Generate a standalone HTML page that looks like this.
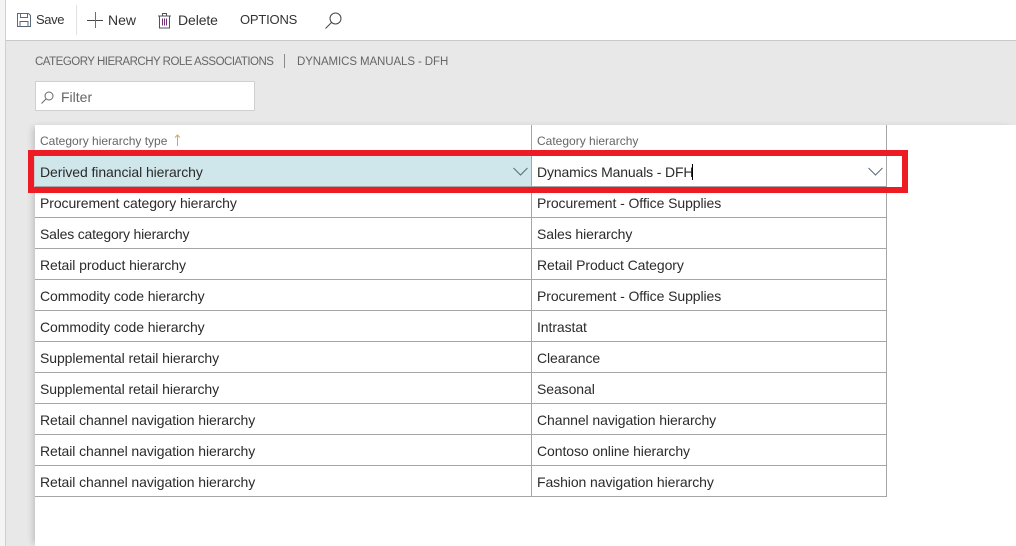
<!DOCTYPE html>
<html><head><meta charset="utf-8">
<style>
html,body{margin:0;padding:0;width:1016px;height:546px;overflow:hidden;background:#fff;font-family:"Liberation Sans",sans-serif;color:#2b2b2b}
.a{position:absolute;white-space:nowrap}
.t{font-size:14px;line-height:20px;top:10px;color:#333}
.c{font-size:14px;line-height:20px;color:#2b2b2b;letter-spacing:-.08px}
.l{position:absolute;height:1px;left:35px;width:852px;background:#a6a6a6}
</style></head><body>
<div class="a" style="left:0;top:0;width:5px;height:546px;background:#f4f4f4"></div>
<div class="a" style="left:5px;top:0;width:1px;height:546px;background:#cfcfcf"></div>
<div class="a" style="left:6px;top:41px;width:1010px;height:505px;background:#e8e8e8"></div>
<div class="a" style="left:6px;top:40px;width:1010px;height:1px;background:#c8c8c8"></div>
<div class="a" style="left:76px;top:5px;width:1px;height:30px;background:#e2e2e2"></div>

<svg class="a" style="left:16px;top:12px" width="16" height="16" fill="none" stroke="#5a6a78" stroke-width="1"><path d="M1.500 1.500h11l2 2v11h-13z"/><path d="M4.500 1.500v4h7v-4M4 14.500v-5h8v5"/></svg>
<div class="a t" style="left:36px;font-size:13px;letter-spacing:-.4px">Save</div>
<svg class="a" style="left:87px;top:12px" width="16" height="16" fill="none" stroke="#444" stroke-width="1"><path d="M0 8.500h16"/><path d="M8.500 0v16" stroke="#8a6a3a"/></svg>
<div class="a t" style="left:108px">New</div>
<svg class="a" style="left:158px;top:13px" width="13" height="16" fill="none" stroke="#4a5560" stroke-width="1"><path d="M0 3h13M4.500 3V.5h4V3M1.500 3v12h10V3"/><path d="M4.500 5.500v7M6.500 5.500v7M8.500 5.500v7" stroke="#7a2f7a"/></svg>
<div class="a t" style="left:178px;letter-spacing:-.1px">Delete</div>
<div class="a t" style="left:240px;font-size:13px;letter-spacing:-.2px">OPTIONS</div>
<svg class="a" style="left:325px;top:12px" width="17" height="17" fill="none" stroke="#444" stroke-width="1"><circle cx="10.500" cy="6.500" r="5.500"/><path d="M6.500 10.500L.5 16.500"/></svg>

<div class="a" style="left:35px;top:54px;font-size:11.500px;line-height:16px;color:#666;letter-spacing:-.5px">CATEGORY HIERARCHY ROLE ASSOCIATIONS</div>
<div class="a" style="left:284px;top:54px;width:1px;height:14px;background:#8a8a8a"></div>
<div class="a" style="left:297px;top:54px;font-size:11.500px;line-height:16px;color:#666;letter-spacing:-.1px">DYNAMICS MANUALS - DFH</div>

<div class="a" style="left:35px;top:81px;width:218px;height:28px;background:#fff;border:1px solid #d0d0d0"></div>
<svg class="a" style="left:41px;top:91px" width="13" height="13" fill="none" stroke="#666" stroke-width="1"><circle cx="8" cy="5" r="4"/><path d="M5 8L.5 12.500"/></svg>
<div class="a" style="left:61px;top:87px;font-size:14px;line-height:20px;color:#666">Filter</div>

<div class="a" style="left:35px;top:125px;width:981px;height:421px;background:#fff;box-shadow:-4px 0 6px -2px rgba(0,0,0,.18)"></div>
<div class="a" style="left:531px;top:125px;width:1px;height:372px;background:#a6a6a6"></div>
<div class="a" style="left:886px;top:125px;width:1px;height:372px;background:#a6a6a6"></div>

<div class="a" style="left:40px;top:133px;font-size:12px;line-height:16px;color:#666">Category hierarchy type</div>
<svg class="a" style="left:173px;top:134px" width="9" height="12" fill="none" stroke="#e0a060" stroke-width="1"><path d="M4.500 12V1M2 3.500L4.500 1L7 3.500"/></svg>
<div class="a" style="left:537px;top:133px;font-size:12px;line-height:16px;color:#666">Category hierarchy</div>

<div class="a" style="left:35px;top:155px;width:496px;height:31px;background:#cfe6ea"></div>
<div class="a" style="left:532px;top:155px;width:354px;height:31px;background:#fff"></div>
<div class="l" style="top:155px"></div>
<div class="l" style="top:186px"></div><div class="l" style="top:217px"></div><div class="l" style="top:248px"></div><div class="l" style="top:279px"></div><div class="l" style="top:310px"></div><div class="l" style="top:341px"></div><div class="l" style="top:372px"></div><div class="l" style="top:403px"></div><div class="l" style="top:434px"></div><div class="l" style="top:465px"></div><div class="l" style="top:496px"></div>

<svg class="a" style="left:513px;top:167px" width="15" height="9" fill="none" stroke="#5a6a78" stroke-width="1"><path d="M.5 1L7.500 8L14.500 1"/></svg>
<svg class="a" style="left:868px;top:167px" width="15" height="9" fill="none" stroke="#5a6a78" stroke-width="1"><path d="M.5 1L7.500 8L14.500 1"/></svg>

<div class="a c" style="left:40px;top:162px">Derived financial hierarchy</div>
<div class="a c" style="left:537px;top:162px;letter-spacing:-.14px">Dynamics Manuals - DFH</div>
<div class="a" style="left:692px;top:164px;width:1px;height:16px;background:#000"></div>
<div class="a c" style="left:40px;top:193px">Procurement category hierarchy</div><div class="a c" style="left:537px;top:193px">Procurement - Office Supplies</div>
<div class="a c" style="left:40px;top:224px;letter-spacing:-.2px">Sales category hierarchy</div><div class="a c" style="left:537px;top:224px">Sales hierarchy</div>
<div class="a c" style="left:40px;top:255px">Retail product hierarchy</div><div class="a c" style="left:537px;top:255px">Retail Product Category</div>
<div class="a c" style="left:40px;top:286px">Commodity code hierarchy</div><div class="a c" style="left:537px;top:286px">Procurement - Office Supplies</div>
<div class="a c" style="left:40px;top:317px">Commodity code hierarchy</div><div class="a c" style="left:537px;top:317px">Intrastat</div>
<div class="a c" style="left:40px;top:348px">Supplemental retail hierarchy</div><div class="a c" style="left:537px;top:348px">Clearance</div>
<div class="a c" style="left:40px;top:379px">Supplemental retail hierarchy</div><div class="a c" style="left:537px;top:379px">Seasonal</div>
<div class="a c" style="left:40px;top:410px">Retail channel navigation hierarchy</div><div class="a c" style="left:537px;top:410px">Channel navigation hierarchy</div>
<div class="a c" style="left:40px;top:441px">Retail channel navigation hierarchy</div><div class="a c" style="left:537px;top:441px">Contoso online hierarchy</div>
<div class="a c" style="left:40px;top:472px">Retail channel navigation hierarchy</div><div class="a c" style="left:537px;top:472px">Fashion navigation hierarchy</div>

<div class="a" style="left:28px;top:150px;width:868px;height:31px;border:6px solid #ed1c24"></div>
</body></html>
